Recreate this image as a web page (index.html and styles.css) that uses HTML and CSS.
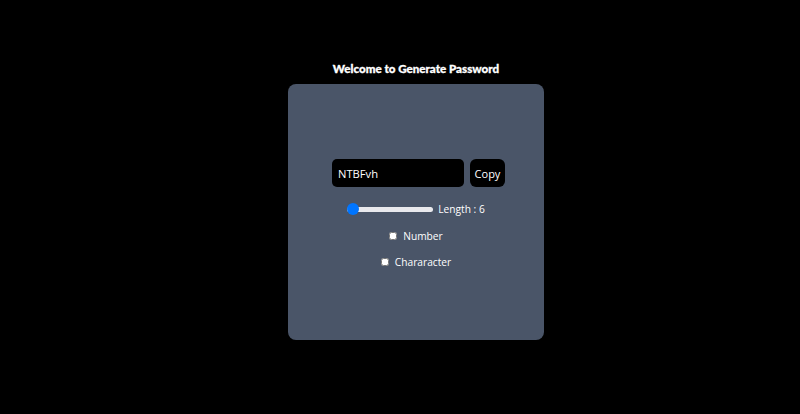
FILE: index.html
```html
<!DOCTYPE html>
<html>
<head>
<meta charset="utf-8">
<link rel="stylesheet" href="styles.css">
</head>
<body>
<div class="page">
  <h1 class="title">Welcome to Generate Password</h1>
  <div class="card">
    <div class="row pw-row">
      <input class="pw" type="text" value="NTBFvh" readonly>
      <button class="copy">Copy</button>
    </div>
    <div class="row slider-row">
      <input class="range" type="range" min="6" max="100" value="6">
      <label class="label">Length : 6</label>
    </div>
    <div class="row check-row">
      <input type="checkbox" class="cb" id="num">
      <label class="label" for="num">Number</label>
    </div>
    <div class="row check-row">
      <input type="checkbox" class="cb" id="chr">
      <label class="label" for="chr">Chararacter</label>
    </div>
  </div>
</div>
</body>
</html>
```
FILE: styles.css
```css
html, body {
  margin: 0;
  padding: 0;
  background: #000;
  font-family: "Open Sans", "Noto Sans", sans-serif;
  color: #fff;
}
.page {
  width: 800px;
  height: 414px;
  display: flex;
  flex-direction: column;
  align-items: center;
  padding-left: 32px;
  box-sizing: border-box;
  padding-top: 60px;
}
.title {
  margin: 0;
  font-family: Lato, "Open Sans", sans-serif;
  font-size: 11.6px;
  font-weight: 900;
  line-height: 18px;
  height: 18px;
  margin-bottom: 6px;
  -webkit-text-stroke: 0.3px #fff;
}
.card {
  width: 256px;
  height: 256px;
  background: #4a5568;
  border-radius: 8px;
  display: flex;
  flex-direction: column;
  align-items: center;
  justify-content: center;
  padding-top: 6px;
  box-sizing: border-box;
}
.row {
  display: flex;
  align-items: center;
  justify-content: center;
}
.pw-row {
  padding-left: 5px;
}
.pw {
  width: 132px;
  height: 28px;
  box-sizing: border-box;
  background: #000;
  color: #fff;
  border: none;
  border-radius: 5px;
  padding: 0 6px;
  font-family: inherit;
  font-size: 11.2px;
  outline: none;
}
.copy {
  margin-left: 6px;
  width: 35px;
  height: 28px;
  background: #000;
  color: #fff;
  border: none;
  border-radius: 6px;
  padding: 0;
  font-family: inherit;
  font-size: 11px;
}
.slider-row {
  margin-top: 12px;
  height: 20px;
}
.range {
  -webkit-appearance: none;
  appearance: none;
  width: 86px;
  height: 12px;
  margin: 0 5px 0 0;
  background: transparent;
}
.range::-webkit-slider-runnable-track {
  height: 5px;
  background: #e9e9ed;
  border-radius: 3px;
}
.range::-webkit-slider-thumb {
  -webkit-appearance: none;
  width: 12px;
  height: 12px;
  margin-top: -3.5px;
  border-radius: 50%;
  background: #0075ff;
  border: none;
}
.label {
  font-size: 10.2px;
}
.check-row {
  margin-top: 7px;
  height: 19px;
}
.cb {
  width: 8px;
  height: 8px;
  margin: 0 6px 0 0;
}
```
